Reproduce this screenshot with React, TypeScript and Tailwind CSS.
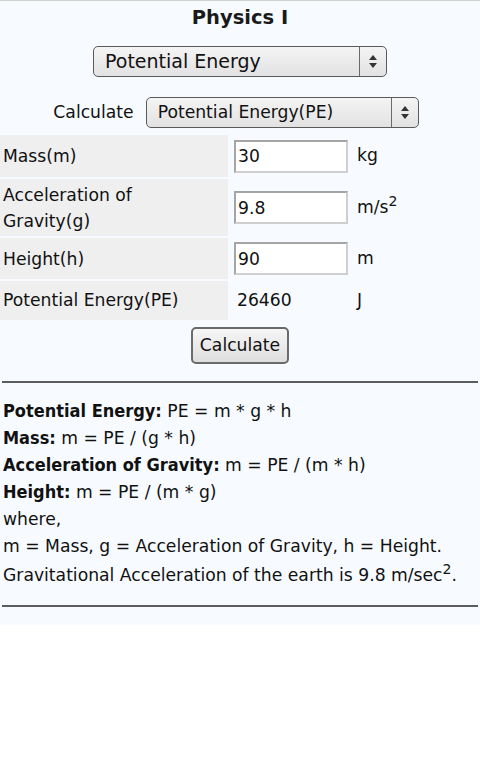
import { useState } from "react";

const font = { fontFamily: '"DejaVu Sans", "Liberation Sans", sans-serif' };
const boldFont = { fontFamily: '"DejaVu Sans Condensed", "DejaVu Sans", sans-serif' };

function FakeSelect({
  value,
  width,
  textWidth,
  size,
}: {
  value: string;
  width: string;
  textWidth: string;
  size: string;
}) {
  return (
    <div
      className={`${width} h-[31px] flex items-stretch rounded-[5px] border border-[#5a5a5a] bg-gradient-to-b from-[#f4f4f4] to-[#e2e2e2] ${size} text-[#111]`}
    >
      <div className={`${textWidth} flex items-center pl-[11px] border-r border-[#6a6a6a] whitespace-nowrap`}>
        {value}
      </div>
      <div className="flex-1 flex flex-col items-center justify-center gap-[3px]">
        <svg width="8" height="5" viewBox="0 0 8 5">
          <path d="M4 0 L8 5 L0 5 Z" fill="#333" />
        </svg>
        <svg width="8" height="5" viewBox="0 0 8 5">
          <path d="M0 0 L8 0 L4 5 Z" fill="#333" />
        </svg>
      </div>
    </div>
  );
}

function B({ children }: { children: React.ReactNode }) {
  return (
    <b className="text-[18px] leading-none" style={boldFont}>
      {children}
    </b>
  );
}

export default function App() {
  const [mass, setMass] = useState("30");
  const [gravity, setGravity] = useState("9.8");
  const [height, setHeight] = useState("90");

  const rows = [
    { label: <>Mass(m)</>, value: mass, set: setMass, unit: <>kg</>, h: "h-[42px]" },
    {
      label: (
        <>
          Acceleration of
          <br />
          Gravity(g)
        </>
      ),
      value: gravity,
      set: setGravity,
      unit: (
        <>
          m/s<sup className="text-[14px]">2</sup>
        </>
      ),
      h: "h-[57px]",
    },
    { label: <>Height(h)</>, value: height, set: setHeight, unit: <>m</>, h: "h-[41px]" },
  ];

  return (
    <div className="w-[480px] h-[770px] bg-white" style={font}>
      <div className="bg-[#f7fbff] border-t border-[#cfcfcf] pb-[18px] text-[#111]">
        {/* Title */}
        <h1 className="text-center font-bold text-[19.5px] leading-[34px] text-[#1a1a1a]">Physics I</h1>

        <div className="flex justify-center mt-[11px]">
          <FakeSelect value="Potential Energy" width="w-[294px]" textWidth="w-[266px]" size="text-[19px]" />
        </div>

        <div className="flex justify-center items-center gap-[12px] mt-[20px] pr-[8px]">
          <span className="text-[17.2px]">Calculate</span>
          <FakeSelect value="Potential Energy(PE)" width="w-[273px]" textWidth="w-[245px]" size="text-[17.2px]" />
        </div>

        {/* Inputs */}
        <div className="flex flex-col gap-[2px] mt-[7px] text-[17.2px]">
          {rows.map((r) => (
            <div key={r.h} className={`flex ${r.h}`}>
              <div className="w-[228px] bg-[#efefef] flex items-center px-[3px] leading-[26px]">{r.label}</div>
              <div className="flex items-center pl-[6px]">
                <input
                  value={r.value}
                  onChange={(e) => r.set(e.target.value)}
                  className="w-[114px] h-[33px] bg-white border-2 border-[#cfcfcf] border-t-[#a5a5a5] border-l-[#a5a5a5] px-[2px] outline-none text-[17.2px] text-[#111]"
                  style={font}
                />
                <span className="ml-[9px]">{r.unit}</span>
              </div>
            </div>
          ))}
          <div className="flex h-[39px]">
            <div className="w-[228px] bg-[#efefef] flex items-center px-[3px]">Potential Energy(PE)</div>
            <div className="flex items-center pl-[9px]">
              <span className="w-[120px]">26460</span>
              <span>J</span>
            </div>
          </div>
        </div>

        <div className="flex justify-center mt-[7px]">
          <button className="w-[98px] h-[37px] rounded-[5px] border-2 border-[#6a6a6a] bg-gradient-to-b from-[#f6f6f6] to-[#dedede] text-[17.2px] text-[#111]">
            Calculate
          </button>
        </div>

        <hr className="mx-[2px] mt-[17px] border-0 border-t-2 border-[#5c5c5c]" />

        {/* Formulas */}
        <div className="px-[3px] pt-[15px] pb-[14px] text-[17.2px] leading-[27px]">
          <div>
            <B>Potential Energy:</B> PE = m * g * h
          </div>
          <div>
            <B>Mass:</B> m = PE / (g * h)
          </div>
          <div>
            <B>Acceleration of Gravity:</B> m = PE / (m * h)
          </div>
          <div>
            <B>Height:</B> m = PE / (m * g)
          </div>
          <div>where,</div>
          <div>m = Mass, g = Acceleration of Gravity, h = Height.</div>
          <div className="leading-[31px]">
            Gravitational Acceleration of the earth is 9.8 m/sec<sup className="text-[14px]">2</sup>.
          </div>
        </div>

        <hr className="mx-[2px] border-0 border-t-2 border-[#5c5c5c]" />
      </div>
    </div>
  );
}
